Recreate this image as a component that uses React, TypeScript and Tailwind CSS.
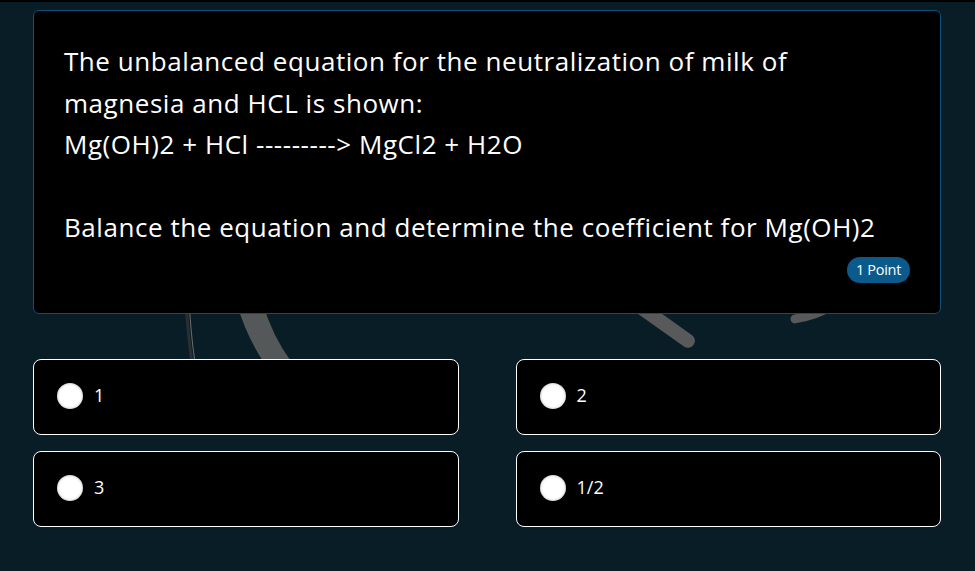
import React from 'react';

const options = ['1', '2', '3', '1/2'];

const Backdrop = () => (
    <svg className="absolute inset-0 w-full h-full pointer-events-none" viewBox="0 0 975 571" preserveAspectRatio="none">
        {/* thin dark arc */}
        <path d="M186 300 Q188 335 192 362" stroke="#2a2f33" strokeWidth="3" fill="none" />
        <path d="M189 300 Q191 335 195 362" stroke="#6b6e70" strokeWidth="1" fill="none" />
        {/* grey band */}
        <path d="M236 300 L262 300 Q272 335 292 362 L264 362 Q246 335 236 300 Z" fill="#555859" />
        {/* grey strokes on the right */}
        <path d="M632 300 L688 340" stroke="#58595a" strokeWidth="14" strokeLinecap="round" fill="none" />
        <path d="M795 318 Q815 315 832 305" stroke="#58595a" strokeWidth="9" strokeLinecap="round" fill="none" />
    </svg>
);

const Option = ({ label }: { label: string }) => (
    <div className="h-[76px] flex items-center bg-black border border-white rounded-lg pl-[23px] pb-[2px]">
        <span className="w-[26px] h-[26px] rounded-full bg-white shadow-[inset_0_0_3px_rgba(0,0,0,0.35)]" />
        <span className="ml-[11px] text-white text-[18px]">{label}</span>
    </div>
);

export default function App() {
    return (
        <div
            className="relative min-h-[571px] bg-[#081d25] border-t-2 border-black overflow-hidden"
            style={{ fontFamily: '"Open Sans", "Noto Sans", sans-serif' }}
        >
            <Backdrop />
            <div className="relative pl-[33px] pr-[34px] pt-[8px]">
                {/* Question card */}
                <div className="bg-black border border-[#0f4f78] rounded-md pt-[30px] pb-[30px] px-[30px]">
                    <div className="text-white text-[26px] leading-[41.5px] tracking-[0.55px]">
                        <p>The unbalanced equation for the neutralization of milk of</p>
                        <p>magnesia and HCL is shown:</p>
                        <p>Mg(OH)2 + HCl ---------&gt; MgCl2 + H2O</p>
                        <p>&nbsp;</p>
                        <p>Balance the equation and determine the coefficient for Mg(OH)2</p>
                    </div>
                    <div className="flex justify-end mt-[8px]">
                        <span className="bg-[#0a5a8c] text-white text-[14.5px] tracking-[-0.3px] leading-[26px] h-[26px] px-[9px] rounded-full">
                            1 Point
                        </span>
                    </div>
                </div>

                {/* Answer options */}
                <div className="grid grid-cols-2 gap-x-[57px] gap-y-[16px] mt-[45px]">
                    {options.map((o) => (
                        <Option key={o} label={o} />
                    ))}
                </div>
            </div>
        </div>
    );
}
